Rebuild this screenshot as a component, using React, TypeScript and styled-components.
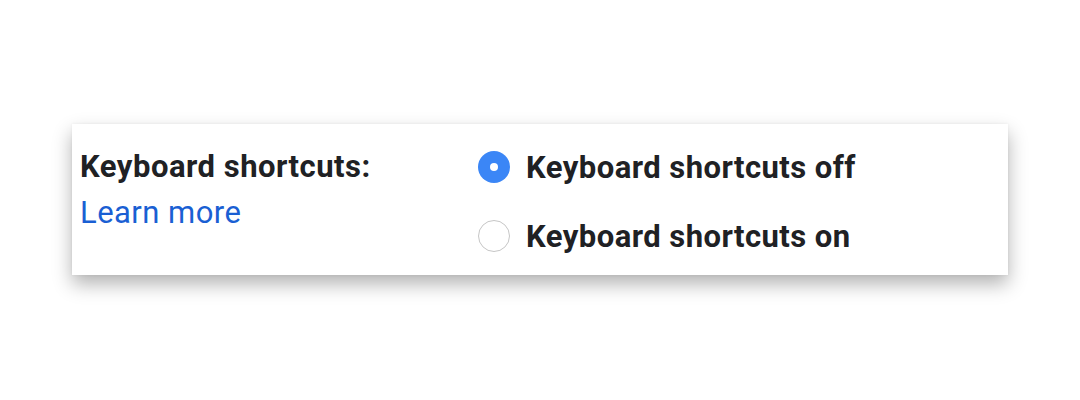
import React from "react";
import styled, { createGlobalStyle } from "styled-components";

const Global = createGlobalStyle`
  html, body { margin: 0; padding: 0; background: #ffffff; }
  body { font-family: Roboto, "Noto Sans", Arial, sans-serif; min-height: 400px; }
`;

const Page = styled.div`
  padding: 124px 0 120px 72px;
`;

const Card = styled.section`
  width: 936px;
  height: 151px;
  box-sizing: border-box;
  background: #ffffff;
  box-shadow: 0 9px 18px rgba(0, 0, 0, 0.3), 0 0 3px rgba(0, 0, 0, 0.06);
  display: grid;
  grid-template-columns: 398px 1fr;
  padding: 20px 0 0 8px;
`;

const LabelCol = styled.div`
  display: flex;
  flex-direction: column;
`;

const Title = styled.div`
  font-size: 31px;
  font-weight: 700;
  letter-spacing: 0.5px;
  color: #202124;
  line-height: 46px;
`;

const Link = styled.a`
  font-size: 31px;
  letter-spacing: 0.45px;
  color: #1a5fd3;
  text-decoration: none;
  line-height: 45px;
`;

const Options = styled.div`
  display: flex;
  flex-direction: column;
  gap: 23px;
`;

const Option = styled.label`
  display: flex;
  align-items: center;
  gap: 16px;
  height: 46px;
  font-size: 31px;
  font-weight: 700;
  letter-spacing: 0.45px;
  color: #202124;
`;

const Radio = styled.span<{ $checked?: boolean }>`
  width: 32px;
  height: 32px;
  border-radius: 50%;
  box-sizing: border-box;
  flex: none;
  display: flex;
  align-items: center;
  justify-content: center;
  background: ${(p) => (p.$checked ? "#3b86f6" : "#ffffff")};
  border: ${(p) => (p.$checked ? "none" : "1.5px solid #c6c6c6")};
  &::after {
    content: "";
    display: ${(p) => (p.$checked ? "block" : "none")};
    width: 8px;
    height: 8px;
    border-radius: 50%;
    background: #ffffff;
  }
`;

export default function App() {
  return (
    <>
      <Global />
      <Page>
        <Card>
          <LabelCol>
            <Title>Keyboard shortcuts:</Title>
            <Link href="#">Learn more</Link>
          </LabelCol>
          <Options>
            <Option>
              <Radio $checked />
              Keyboard shortcuts off
            </Option>
            <Option>
              <Radio />
              Keyboard shortcuts on
            </Option>
          </Options>
        </Card>
      </Page>
    </>
  );
}
